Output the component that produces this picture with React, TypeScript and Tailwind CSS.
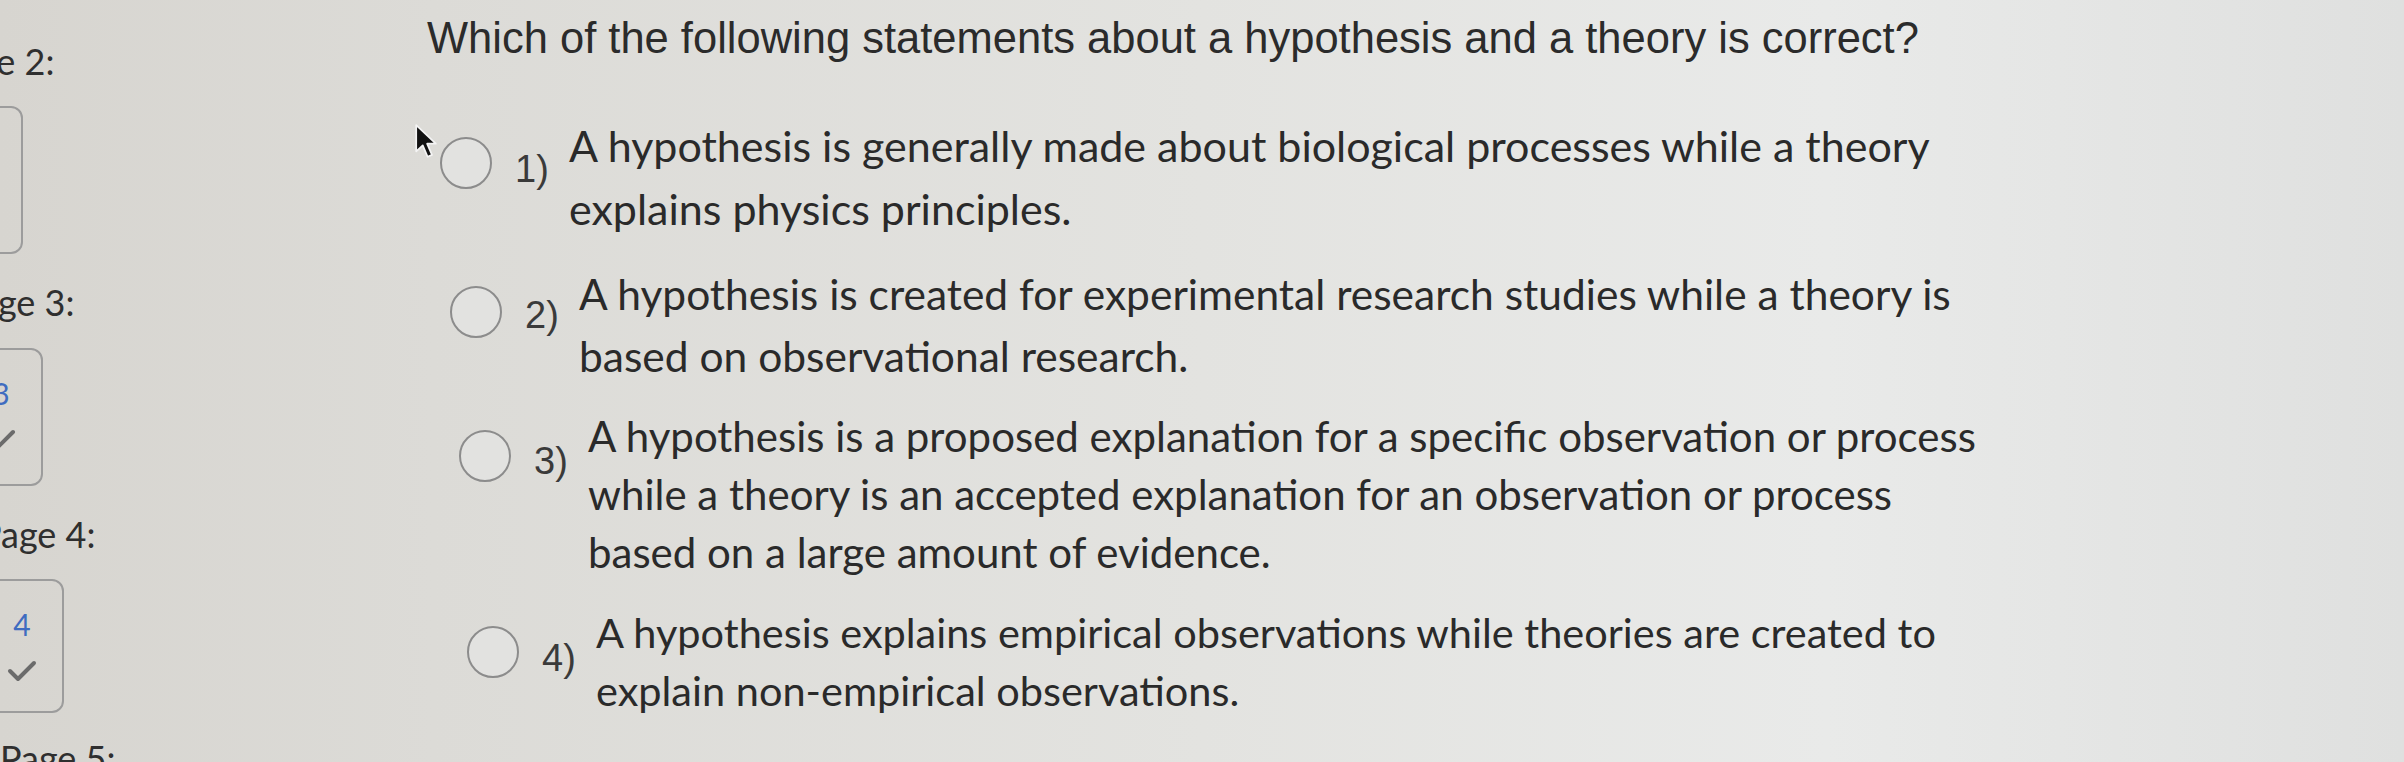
import React from "react";

const lato = { fontFamily: "Lato, 'Open Sans', sans-serif" };
const arial = { fontFamily: "'Liberation Sans', Arial, sans-serif" };

type Option = {
  num: string;
  lines: string[];
  offset: string;
  gap: string;
  text: string;
  numTop: string;
};

// the photo is taken at a slight angle, so each row sits a bit further right
// and the lower rows come out a touch smaller
const options: Option[] = [
  {
    num: "1)",
    lines: [
      "A hypothesis is generally made about biological processes while a theory",
      "explains physics principles.",
    ],
    offset: "ml-[13px]",
    gap: "mt-[53px]",
    text: "text-[43px] leading-[63px]",
    numTop: "mt-[36px]",
  },
  {
    num: "2)",
    lines: [
      "A hypothesis is created for experimental research studies while a theory is",
      "based on observational research.",
    ],
    offset: "ml-[23px]",
    gap: "mt-[23px]",
    text: "text-[42.5px] leading-[62px]",
    numTop: "mt-[33px]",
  },
  {
    num: "3)",
    lines: [
      "A hypothesis is a proposed explanation for a specific observation or process",
      "while a theory is an accepted explanation for an observation or process",
      "based on a large amount of evidence.",
    ],
    offset: "ml-[32px]",
    gap: "mt-[20px]",
    text: "text-[42px] leading-[58px]",
    numTop: "mt-[35px]",
  },
  {
    num: "4)",
    lines: [
      "A hypothesis explains empirical observations while theories are created to",
      "explain non-empirical observations.",
    ],
    offset: "ml-[40px]",
    gap: "mt-[22px]",
    text: "text-[41.5px] leading-[58px]",
    numTop: "mt-[36px]",
  },
];

const pages = [
  { label: "Page 2:", shift: "ml-[-61px]", top: "mt-[43px]", gap: "mt-[27px]", h: "h-[148px]", num: "2" },
  { label: "Page 3:", shift: "ml-[-41px]", top: "mt-[30px]", gap: "mt-[28px]", h: "h-[138px]", num: "3" },
  { label: "Page 4:", shift: "ml-[-20px]", top: "mt-[30px]", gap: "mt-[27px]", h: "h-[134px]", num: "4" },
  { label: "Page 5:", shift: "ml-[0px]", top: "mt-[27px]", gap: "mt-[28px]", h: "h-[134px]", num: "5" },
];

function Check() {
  return (
    <svg width="30" height="24" viewBox="0 0 30 24" fill="none">
      <path d="M3 12 L11 20 L27 4" stroke="#6b6b6b" strokeWidth="4" strokeLinecap="round" strokeLinejoin="round" />
    </svg>
  );
}

function Cursor() {
  return (
    <svg className="absolute left-[414px] top-[123px]" width="24" height="37" viewBox="0 0 22 34">
      <path
        d="M2 2 L2 26 L8 20.5 L12.5 31 L16.5 29.3 L12 19 L20 19 Z"
        fill="#111"
        stroke="#f4f4f4"
        strokeWidth="1.6"
        strokeLinejoin="round"
      />
    </svg>
  );
}

export default function App() {
  return (
    <div className="relative w-[2404px] h-[762px] overflow-hidden flex bg-[linear-gradient(90deg,#d7d5d0_0%,#dcdbd7_18%,#e3e3e0_50%,#e9eae9_76%,#dfe0df_100%)]">
      {/* left page nav */}
      <aside className="w-[110px] shrink-0 flex flex-col" style={lato}>
        {pages.map((p) => (
          <div key={p.label} className={`${p.shift} ${p.top} flex flex-col`}>
            <div className="text-[36px] leading-[36px] text-[#2f2f2f] whitespace-nowrap">{p.label}</div>
            <div
              className={`${p.gap} ${p.h} w-[84px] shrink-0 rounded-[12px] border-2 border-[#9c9c9c] flex flex-col items-center pt-[26px] gap-[18px]`}
            >
              <span className="text-[30px] leading-[34px] text-[#3f6cc0]">{p.num}</span>
              <Check />
            </div>
          </div>
        ))}
      </aside>

      {/* question */}
      <main className="flex-1 pl-[317px] pt-[17px]">
        <h2 className="text-[43.5px] leading-[43.5px] text-[#2b2b2b] whitespace-nowrap" style={arial}>
          Which of the following statements about a hypothesis and a theory is correct?
        </h2>

        {options.map((o) => (
          <div key={o.num} className={`${o.gap} ${o.offset} flex items-start`}>
            <span className="mt-[23px] w-[52px] h-[52px] shrink-0 rounded-full border-2 border-[#8c8c8c] bg-[#e2e2e0]" />
            <span
              className={`${o.numTop} ml-[23px] w-[34px] shrink-0 text-[38px] leading-[38px] text-[#3a3a3a]`}
              style={arial}
            >
              {o.num}
            </span>
            <div className={`${o.text} ml-[20px] text-[#2a2a2a]`} style={lato}>
              {o.lines.map((l) => (
                <div key={l} className="whitespace-nowrap">
                  {l}
                </div>
              ))}
            </div>
          </div>
        ))}
      </main>

      <Cursor />
    </div>
  );
}
